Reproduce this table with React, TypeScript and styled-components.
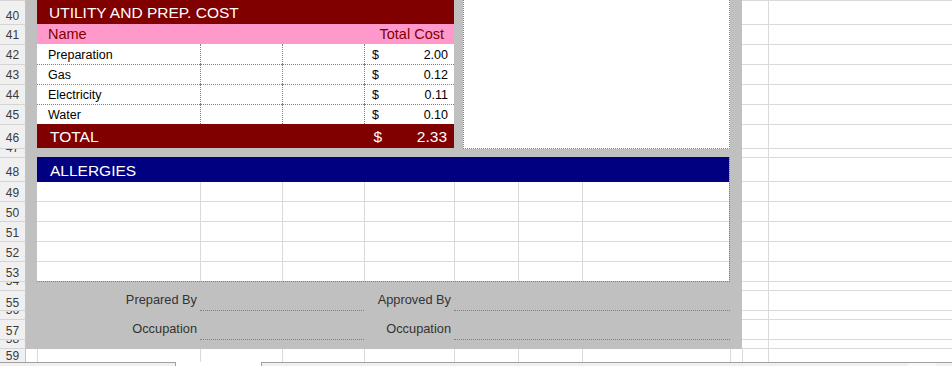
import React from "react";
import styled, { createGlobalStyle } from "styled-components";

const FONT = `"Liberation Sans", Arial, sans-serif`;
const GRID = "#dadada";
const DOT = "#808080";
const MAROON = "#800000";
const SILVER = "#c0c0c0";

// spreadsheet rows 40..59, heights in px, bottom padding of the row number
const rows = [
  { n: 40, h: 24, pad: 2 },
  { n: 41, h: 20, pad: 3 },
  { n: 42, h: 20, pad: 3 },
  { n: 43, h: 20, pad: 3 },
  { n: 44, h: 20, pad: 3 },
  { n: 45, h: 20, pad: 3 },
  { n: 46, h: 24, pad: 4 },
  { n: 47, h: 9, pad: 3 },
  { n: 48, h: 24, pad: 3 },
  { n: 49, h: 20, pad: 2.5 },
  { n: 50, h: 20, pad: 2.5 },
  { n: 51, h: 20, pad: 2.5 },
  { n: 52, h: 20, pad: 2.5 },
  { n: 53, h: 20, pad: 2.5 },
  { n: 54, h: 9, pad: 3 },
  { n: 55, h: 20, pad: 1.5 },
  { n: 56, h: 9, pad: 3 },
  { n: 57, h: 20, pad: 2 },
  { n: 58, h: 9, pad: 3 },
  { n: 59, h: 14, pad: 0 },
];

const costs = [
  { name: "Preparation", value: "2.00" },
  { name: "Gas", value: "0.12" },
  { name: "Electricity", value: "0.11" },
  { name: "Water", value: "0.10" },
];

const GlobalStyle = createGlobalStyle`
  html, body {
    margin: 0;
    padding: 0;
    background: #fff;
  }
  body {
    font-family: ${FONT};
    overflow: hidden;
  }
  * {
    box-sizing: border-box;
  }
`;

const Window = styled.div`
  width: 952px;
  height: 366px;
  overflow: hidden;
  display: flex;
  flex-direction: column;
`;

// columns: header, A, B, C, D, E, F, G, H, I, J, K
const Sheet = styled.div<{ $rows: string }>`
  display: grid;
  grid-template-columns: 26px 11px 163px 82px 82px 90px 64px 64px 148px 12px 26px 1fr;
  grid-template-rows: ${(p) => p.$rows};
  flex: none;
`;

const RowHead = styled.div<{ $row: number; $pad: number }>`
  grid-column: 1;
  grid-row: ${(p) => p.$row};
  background: #f0f0f0;
  border-top: 1px solid #d4d4d4;
  border-right: 1px solid #c4c4c4;
  display: flex;
  justify-content: center;
  align-items: flex-end;
  padding-bottom: ${(p) => p.$pad}px;
  overflow: hidden;
  font-size: 12px;
  line-height: 12px;
  color: #3a3a3a;
`;

const BlankCell = styled.div<{ $col: number; $row: number; $left?: boolean; $top?: boolean }>`
  grid-column: ${(p) => p.$col};
  grid-row: ${(p) => p.$row};
  background: #fff;
  border-left: ${(p) => (p.$left ? `1px solid ${GRID}` : "none")};
  border-top: ${(p) => (p.$top ? `1px solid ${GRID}` : "none")};
`;

const Backdrop = styled.div`
  grid-column: 2 / 11;
  grid-row: 1 / 20;
  margin-bottom: -1px;
  background: ${SILVER};
`;

/* utility cost table */
const CostTable = styled.div`
  grid-column: 3 / 7;
  grid-row: 1 / 8;
  display: grid;
  grid-template-columns: 163px 82px 82px 90px;
  grid-template-rows: 24px repeat(5, 20px) 24px;
  background: #fff;
  line-height: 1;
`;

const TitleBar = styled.div`
  grid-column: 1 / -1;
  background: ${MAROON};
  color: #fff;
  font-size: 15.5px;
  display: flex;
  align-items: flex-end;
  padding: 0 0 3.5px 12px;
`;

const PinkBar = styled.div`
  grid-column: 1 / -1;
  background: #ff99cc;
  color: ${MAROON};
  font-size: 14.5px;
  display: flex;
  justify-content: space-between;
  align-items: flex-end;
  padding: 0 10px 2.5px 11px;
`;

const LineCell = styled.div<{ $top: boolean; $left?: boolean }>`
  display: flex;
  align-items: flex-end;
  padding: 0 0 3px ${(p) => (p.$left ? 0 : 11)}px;
  font-size: 12.5px;
  color: #000;
  border-top: ${(p) => (p.$top ? `1px dotted ${DOT}` : "none")};
  border-left: ${(p) => (p.$left ? `1px dotted ${DOT}` : "none")};
`;

const MoneyCell = styled(LineCell)`
  justify-content: space-between;
  padding: 0 6px 3px 7px;
  border-left: 1px dotted ${DOT};
`;

const TotalBar = styled.div`
  grid-column: 1 / -1;
  display: grid;
  grid-template-columns: 314px 1fr;
  align-items: end;
  background: ${MAROON};
  color: #fff;
  font-size: 15.5px;
  padding: 0 7px 3.5px 13px;
`;

const TotalMoney = styled.div`
  display: flex;
  justify-content: space-between;
  padding-left: 9.5px;
`;

const PictureFrame = styled.div`
  grid-column: 7 / 10;
  grid-row: 1 / 8;
  margin: 0 0 -1px 9px;
  background: #fff;
  border: 1px dotted ${DOT};
  border-top: none;
`;

/* allergies */
const AllergyBlock = styled.div`
  grid-column: 3 / 10;
  grid-row: 9 / 15;
  margin-bottom: -1px;
  display: grid;
  grid-template-columns: 163px 82px 82px 90px 64px 64px 1fr;
  grid-template-rows: 25px 19px repeat(4, 20px);
  border-right: 1px dotted ${DOT};
  border-bottom: 1px dotted ${DOT};
`;

const NavyBar = styled.div`
  grid-column: 1 / -1;
  background: #000080;
  color: #fff;
  font-size: 15.5px;
  line-height: 1;
  display: flex;
  align-items: flex-end;
  padding: 0 0 4px 13px;
`;

const AllergyCell = styled.div<{ $left: boolean; $top: boolean }>`
  background: #fff;
  border-left: ${(p) => (p.$left ? `1px solid ${GRID}` : "none")};
  border-top: ${(p) => (p.$top ? `1px solid ${GRID}` : "none")};
`;

/* signatures */
const SignLabel = styled.div<{ $col: number; $row: number }>`
  grid-column: ${(p) => p.$col};
  grid-row: ${(p) => p.$row};
  display: flex;
  justify-content: flex-end;
  align-items: flex-end;
  padding: 0 3px 3px 0;
  font-size: 12.8px;
  line-height: 1;
  color: #333;
`;

const SignLine = styled.div<{ $cols: string; $row: number }>`
  grid-column: ${(p) => p.$cols};
  grid-row: ${(p) => p.$row};
  margin-bottom: -1px;
  border-bottom: 1px dotted ${DOT};
`;

/* sheet tabs strip at the bottom */
const TabBar = styled.div`
  display: flex;
  height: 4px;
  background: #f0f0f0;
`;

const TabEdge = styled.div<{ $width?: number }>`
  ${(p) => (p.$width ? `width: ${p.$width}px;` : "flex: 1;")}
  border-top: 1px solid #a0a0a0;
  display: flex;
  justify-content: flex-end;
  padding-right: 16px;
`;

const ActiveTab = styled.div`
  width: 87px;
  background: #fff;
  border-left: 1px solid #a0a0a0;
  border-right: 1px solid #a0a0a0;
`;

const ScrollThumb = styled.div`
  width: 28px;
  background: #f8f8f8;
`;

export default function App() {
  const template = rows.map((r) => `${r.h}px`).join(" ");
  const last = rows.length;

  return (
    <>
      <GlobalStyle />
      <Window>
        <Sheet $rows={template}>
          {rows.map((r, i) => (
            <RowHead key={r.n} $row={i + 1} $pad={r.pad}>
              {r.n}
            </RowHead>
          ))}

          {rows.map((r, i) => (
            <React.Fragment key={`jk${r.n}`}>
              <BlankCell $col={11} $row={i + 1} $top $left={i + 1 === last} />
              <BlankCell $col={12} $row={i + 1} $top $left />
            </React.Fragment>
          ))}

          {[2, 3, 4, 5, 6, 7, 8, 9, 10].map((c) => (
            <BlankCell key={`r59${c}`} $col={c} $row={last} $left={c > 2} />
          ))}

          <Backdrop />

          <CostTable>
            <TitleBar>UTILITY AND PREP. COST</TitleBar>
            <PinkBar>
              <span>Name</span>
              <span>Total Cost</span>
            </PinkBar>
            {costs.map((c, i) => (
              <React.Fragment key={c.name}>
                <LineCell $top={i > 0}>{c.name}</LineCell>
                <LineCell $top={i > 0} $left />
                <LineCell $top={i > 0} $left />
                <MoneyCell $top={i > 0}>
                  <span>$</span>
                  <span>{c.value}</span>
                </MoneyCell>
              </React.Fragment>
            ))}
            <TotalBar>
              <span>TOTAL</span>
              <TotalMoney>
                <span>$</span>
                <span>2.33</span>
              </TotalMoney>
            </TotalBar>
          </CostTable>

          <PictureFrame />

          <AllergyBlock>
            <NavyBar>ALLERGIES</NavyBar>
            {[0, 1, 2, 3, 4].map((r) =>
              [0, 1, 2, 3, 4, 5, 6].map((c) => (
                <AllergyCell key={`a${r}${c}`} $left={c > 0} $top={r > 0} />
              ))
            )}
          </AllergyBlock>

          <SignLabel $col={3} $row={16}>Prepared By</SignLabel>
          <SignLine $cols="4 / 6" $row={16} />
          <SignLabel $col={6} $row={16}>Approved By</SignLabel>
          <SignLine $cols="7 / 10" $row={16} />
          <SignLabel $col={3} $row={18}>Occupation</SignLabel>
          <SignLine $cols="4 / 6" $row={18} />
          <SignLabel $col={6} $row={18}>Occupation</SignLabel>
          <SignLine $cols="7 / 10" $row={18} />
        </Sheet>

        <TabBar>
          <TabEdge $width={175} />
          <ActiveTab />
          <TabEdge>
            <ScrollThumb />
          </TabEdge>
        </TabBar>
      </Window>
    </>
  );
}
